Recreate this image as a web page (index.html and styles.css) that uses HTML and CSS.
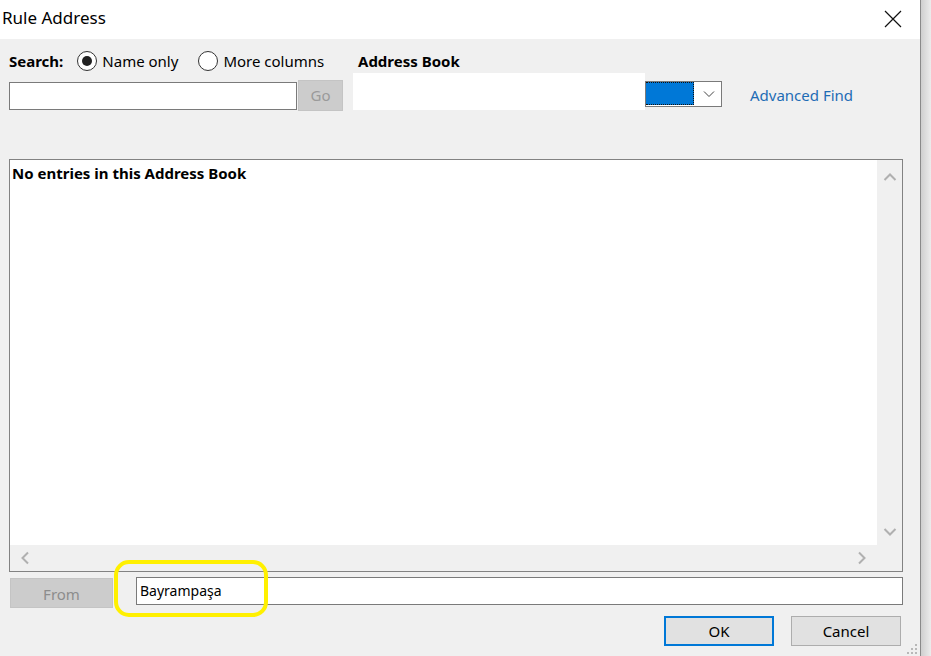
FILE: index.html
```html
<!DOCTYPE html>
<html>
<head>
    <meta charset="UTF-8">
    <title>Rule Address</title>
    <link rel="stylesheet" href="styles.css">
</head>
<body>

<div class="screen">
    <div class="dialog">
        <div class="title_bar">
            <span class="title">Rule Address</span>
            <svg class="close_icon" width="18" height="18" viewBox="0 0 18 18">
                <path d="M1 1L17 17M17 1L1 17" stroke="#111" stroke-width="1.2" fill="none"/>
            </svg>
        </div>

        <div class="content">
            <div class="toolbar">
                <div class="search_col">
                    <div class="search_row">
                        <span class="label">Search:</span>
                        <span class="radio checked"></span>
                        <span class="radio_text">Name only</span>
                        <span class="radio"></span>
                        <span class="radio_text">More columns</span>
                    </div>
                    <div class="input_row">
                        <div class="search_input"></div>
                        <div class="go_bt">Go</div>
                    </div>
                </div>

                <div class="book_col">
                    <div class="label">Address Book</div>
                    <div class="book_row">
                        <div class="book_blank"></div>
                        <div class="combo">
                            <div class="combo_sel"></div>
                            <svg width="12" height="8" viewBox="0 0 12 8">
                                <path d="M1 1.5L6 6.5L11 1.5" stroke="#444" stroke-width="1" fill="none"/>
                            </svg>
                        </div>
                    </div>
                </div>

                <a class="adv_link" href="">Advanced Find</a>
            </div>

            <div class="list_box">
                <div class="list_main">
                    <div class="list_body">
                        <div class="empty_text">No entries in this Address Book</div>
                    </div>
                    <div class="vscroll">
                        <svg width="14" height="10" viewBox="0 0 14 10">
                            <path d="M1.5 8L7 2.5L12.5 8" stroke="#b0b0b0" stroke-width="2" fill="none"/>
                        </svg>
                        <svg width="14" height="10" viewBox="0 0 14 10">
                            <path d="M1.5 2L7 7.5L12.5 2" stroke="#b0b0b0" stroke-width="2" fill="none"/>
                        </svg>
                    </div>
                </div>
                <div class="hscroll">
                    <svg width="10" height="14" viewBox="0 0 10 14">
                        <path d="M8 1.5L2.5 7L8 12.5" stroke="#b0b0b0" stroke-width="2" fill="none"/>
                    </svg>
                    <svg width="10" height="14" viewBox="0 0 10 14">
                        <path d="M2 1.5L7.5 7L2 12.5" stroke="#b0b0b0" stroke-width="2" fill="none"/>
                    </svg>
                </div>
            </div>

            <div class="from_row">
                <div class="from_bt">From</div>
                <div class="from_input">Bayrampaşa</div>
            </div>

            <div class="button_row">
                <div class="bt ok_bt">OK</div>
                <div class="bt">Cancel</div>
            </div>

            <div class="highlight"></div>

            <svg class="grip" width="12" height="12" viewBox="0 0 12 12">
                <rect x="8" y="0" width="2" height="2" fill="#b8b8b8"/>
                <rect x="4" y="4" width="2" height="2" fill="#b8b8b8"/>
                <rect x="8" y="4" width="2" height="2" fill="#b8b8b8"/>
                <rect x="0" y="8" width="2" height="2" fill="#b8b8b8"/>
                <rect x="4" y="8" width="2" height="2" fill="#b8b8b8"/>
                <rect x="8" y="8" width="2" height="2" fill="#b8b8b8"/>
            </svg>
        </div>
    </div>
    <div class="shadow"></div>
</div>

</body>
</html>
```

FILE: styles.css
```css
*{
    margin: 0;
    padding: 0;
    box-sizing: border-box;
}
body{
    width: 931px;
    height: 656px;
    overflow: hidden;
    font-family: "Noto Sans", "Open Sans", sans-serif;
    font-size: 15px;
    color: #000;
    background: #fff;
}
.screen{
    display: flex;
    height: 656px;
}
.dialog{
    width: 921px;
    height: 656px;
    display: flex;
    flex-direction: column;
    border-right: 1px solid #8a8a8a;
}
.shadow{
    flex: 1;
    background: linear-gradient(to right, #cfcfcf, #ececec);
}
.title_bar{
    height: 39px;
    background: #fff;
    display: flex;
    align-items: center;
    justify-content: space-between;
    padding: 0 18px 4px 2px;
}
.title{
    font-size: 17px;
}
.close_icon{
    margin-top: 2px;
}
.content{
    flex: 1;
    position: relative;
    background: #f0f0f0;
    padding: 11px 17px 0 9px;
}

/* top area */
.toolbar{
    display: flex;
    align-items: flex-start;
}
.search_col{
    width: 334px;
    flex-shrink: 0;
}
.search_row{
    display: flex;
    align-items: center;
    height: 22px;
    white-space: nowrap;
}
.label{
    font-weight: bold;
    white-space: nowrap;
}
.search_row .label{
    margin-right: 14px;
}
.radio{
    flex-shrink: 0;
    width: 20px;
    height: 20px;
    border: 1px solid #333;
    border-radius: 50%;
    background: #fff;
    position: relative;
}
.radio.checked::after{
    content: "";
    position: absolute;
    left: 4px;
    top: 4px;
    width: 10px;
    height: 10px;
    border-radius: 50%;
    background: #222;
}
.radio_text{
    flex-shrink: 0;
    margin-left: 5px;
    margin-right: 20px;
}
.input_row{
    display: flex;
    align-items: center;
    margin-top: 8px;
    height: 31px;
}
.search_input{
    width: 288px;
    height: 28px;
    background: #fff;
    border: 1px solid #7a7a7a;
}
.go_bt{
    width: 45px;
    height: 31px;
    margin-left: 1px;
    background: #cccccc;
    border: 1px solid #c4c4c4;
    color: #9a9a9a;
    text-align: center;
    line-height: 29px;
}
.book_col{
    margin-left: 10px;
    margin-top: -1px;
}
.book_col .label{
    height: 24px;
    line-height: 24px;
    padding-left: 5px;
}
.book_row{
    display: flex;
    align-items: center;
}
.book_blank{
    width: 292px;
    height: 37px;
    background: #fff;
}
.combo{
    width: 77px;
    height: 26px;
    margin-top: 4px;
    border: 1px solid #7a7a7a;
    background: #fff;
    display: flex;
    align-items: center;
}
.combo_sel{
    width: 48px;
    height: 23px;
    margin-top: -1px;
    background: #0078d7;
    border: 1px dotted #111;
    border-left: none;
}
.combo svg{
    margin-left: 9px;
}
.adv_link{
    margin-left: 28px;
    margin-top: 35px;
    color: #1e6cb5;
    text-decoration: none;
    white-space: nowrap;
}

/* list */
.list_box{
    margin-top: 48px;
    width: 894px;
    height: 413px;
    border: 1px solid #828282;
    display: flex;
    flex-direction: column;
}
.list_main{
    flex: 1;
    display: flex;
}
.list_body{
    flex: 1;
    background: #fff;
    padding: 3px 2px;
}
.empty_text{
    font-weight: bold;
}
.vscroll{
    width: 25px;
    background: #f0f0f0;
    display: flex;
    flex-direction: column;
    justify-content: space-between;
    align-items: center;
    padding: 12px 0 8px;
}
.hscroll{
    height: 26px;
    background: #f0f0f0;
    display: flex;
    justify-content: space-between;
    align-items: center;
    padding: 0 35px 0 10px;
}

/* bottom */
.from_row{
    display: flex;
    align-items: flex-start;
    margin-top: 5px;
}
.from_bt{
    width: 103px;
    height: 30px;
    margin: 1px 0 0 1px;
    background: #cccccc;
    border: 1px solid #c4c4c4;
    color: #8c8c8c;
    text-align: center;
    line-height: 30px;
}
.from_input{
    width: 767px;
    height: 28px;
    margin-left: 23px;
    background: #fff;
    border: 1px solid #7a7a7a;
    padding-left: 3px;
    font-size: 14px;
    line-height: 26px;
}
.button_row{
    display: flex;
    justify-content: flex-end;
    gap: 17px;
    margin-top: 8px;
    padding-right: 2px;
}
.bt{
    width: 110px;
    height: 30px;
    background: #e1e1e1;
    border: 1px solid #adadad;
    text-align: center;
    line-height: 28px;
}
.ok_bt{
    border: 2px solid #0078d7;
    line-height: 26px;
}
.highlight{
    position: absolute;
    left: 114px;
    top: 521px;
    width: 154px;
    height: 57px;
    border: 4px solid #fff000;
    border-radius: 15px;
}
.grip{
    position: absolute;
    right: 1px;
    bottom: 0;
}
```
